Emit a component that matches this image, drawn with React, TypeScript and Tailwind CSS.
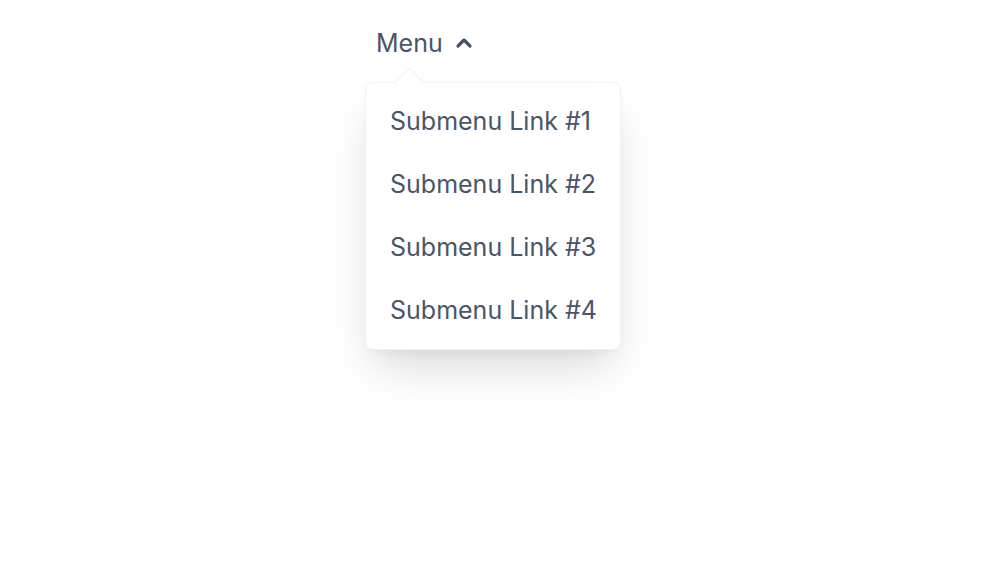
import { ChevronUp } from "lucide-react";

const links = ["Submenu Link #1", "Submenu Link #2", "Submenu Link #3", "Submenu Link #4"];

export default function App() {
    return (
        <div className="w-full h-[562px] bg-white font-['Inter',sans-serif] text-[#4a5568]">
            <div className="relative ml-[365px] pt-[27px] w-64">
                <button className="flex items-center gap-[9px] px-[11px] h-8 text-[25px] leading-8">
                    <span>Menu</span>
                    <ChevronUp className="w-6 h-6" strokeWidth={3.2} />
                </button>

                <div className="absolute left-0 top-[82px] w-64 bg-white border border-[#f0f2f5] rounded-lg shadow-[0_24px_44px_-10px_rgba(0,0,0,0.16),0_8px_14px_-6px_rgba(0,0,0,0.05)]">
                    <div className="absolute left-[33px] -top-[11px] w-[21px] h-[21px] bg-white border-l border-t border-[#f0f2f5] rotate-45" />
                    <ul className="relative py-[7px]">
                        {links.map((link) => (
                            <li key={link}>
                                <a href="#" className="flex items-center h-[63px] pl-6 pr-2 text-[25px] whitespace-nowrap">
                                    {link}
                                </a>
                            </li>
                        ))}
                    </ul>
                </div>
            </div>
        </div>
    );
}
